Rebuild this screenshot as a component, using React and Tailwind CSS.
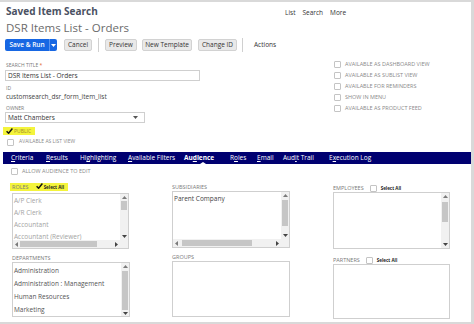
import React from "react";

const Arrow = ({ dir }) => {
  if (dir === "up")
    return (
      <svg width="5" height="3" viewBox="0 0 5 3"><polygon points="0,3 2.5,0 5,3" fill="#7a7a7a" /></svg>
    );
  if (dir === "down")
    return (
      <svg width="5" height="3" viewBox="0 0 5 3"><polygon points="0,0 5,0 2.5,3" fill="#444" /></svg>
    );
  if (dir === "left")
    return (
      <svg width="3" height="5" viewBox="0 0 3 5"><polygon points="3,0 3,5 0,2.5" fill="#7a7a7a" /></svg>
    );
  return (
    <svg width="3" height="5" viewBox="0 0 3 5"><polygon points="0,0 0,5 3,2.5" fill="#444" /></svg>
  );
};

const Check = () => (
  <svg width="7" height="6" viewBox="0 0 7 6">
    <path d="M0.6 3.2 L2.6 5.2 L6.4 0.6" stroke="#111" strokeWidth="1.5" fill="none" />
  </svg>
);

const Box = () => (
  <div className="h-[7px] w-[7px] shrink-0 rounded-[1px] border border-[#c4c4c4] bg-white" />
);

function VScroll({ thumb }) {
  return (
    <div className="flex w-[8px] shrink-0 flex-col bg-[#f1f1f1]">
      <div className="flex h-[7px] items-center justify-center">
        <Arrow dir="up" />
      </div>
      <div className="flex-1">
        <div className={"mx-[1px] bg-[#c6c6c6] " + thumb} />
      </div>
      <div className="flex h-[7px] items-center justify-center">
        <Arrow dir="down" />
      </div>
    </div>
  );
}

function HScroll({ thumb }) {
  return (
    <div className="flex h-[8px] shrink-0">
      <div className="flex flex-1 bg-[#f1f1f1]">
        <div className="flex w-[7px] items-center justify-center">
          <Arrow dir="left" />
        </div>
        <div className="flex-1 py-[1px]">
          <div className={"h-full bg-[#c6c6c6] " + thumb} />
        </div>
        <div className="flex w-[7px] items-center justify-center">
          <Arrow dir="right" />
        </div>
      </div>
      <div className="w-[8px] bg-[#f1f1f1]" />
    </div>
  );
}

const Label = ({ children, className = "" }) => (
  <div className={"text-[5.5px] uppercase leading-[8px] text-[#7a7a7a] " + className}>{children}</div>
);

const tabs = [
  ["", "C", "riteria", "w-[35px]"],
  ["", "R", "esults", "w-[34px]"],
  ["Hi", "g", "hlighting", "w-[48px]"],
  ["", "A", "vailable Filters", "w-[56px]"],
  ["Au", "d", "ience", "w-[46px]"],
  ["R", "o", "les", "w-[27px]"],
  ["", "E", "mail", "w-[26px]"],
  ["Aud", "i", "t Trail", "w-[46px]"],
  ["E", "x", "ecution Log", "w-[60px]"],
];

export default function App() {
  return (
    <div className="h-[324px] w-[474px] overflow-hidden border-t-2 border-r-[3px] border-b-2 border-[#d9d9d9] bg-white font-['Open_Sans',sans-serif] text-[#333]">
      {/* Header */}
      <div className="flex pl-[5px]">
        <div className="w-[280px]">
          <div className="mt-[2px] pl-[1px] text-[10px] font-bold leading-[14px] text-[#4a5162]">
            Saved Item Search
          </div>
          <div className="mt-[2px] pl-[1px] text-[11.5px] leading-[16px] text-[#6b6b6b]">
            DSR Items List - Orders
          </div>
          <div className="mt-[3px] flex h-[12px] items-center text-[6.5px]">
            <div className="flex h-full w-[44px] items-center justify-center rounded-l-[2px] bg-[#1767e3] font-semibold text-white">
              Save &amp; Run
            </div>
            <div className="flex h-full w-[8px] items-center justify-center rounded-r-[2px] border-l border-[#5b93ee] bg-[#1767e3]">
              <svg width="5" height="3" viewBox="0 0 5 3"><polygon points="0,0 5,0 2.5,3" fill="#fff" /></svg>
            </div>
            <div className="ml-[7px] flex h-full w-[28px] items-center justify-center rounded-[2px] border border-[#d2d2d2] bg-[#e9e9e9]">
              Cancel
            </div>
            <div className="ml-[6px] h-[14px] w-[1px] bg-[#d0d0d0]" />
            <div className="ml-[6px] flex h-full w-[32px] items-center justify-center rounded-[2px] border border-[#d2d2d2] bg-[#e9e9e9]">
              Preview
            </div>
            <div className="ml-[5px] flex h-full w-[50px] items-center justify-center rounded-[2px] border border-[#d2d2d2] bg-[#e9e9e9]">
              New Template
            </div>
            <div className="ml-[6px] flex h-full w-[39px] items-center justify-center rounded-[2px] border border-[#d2d2d2] bg-[#e9e9e9]">
              Change ID
            </div>
            <div className="ml-[5px] h-[14px] w-[1px] bg-[#d0d0d0]" />
            <div className="ml-[11px]">Actions</div>
          </div>
        </div>
        <div className="mt-[6px] flex h-[9px] gap-[7px] text-[6.5px] leading-[9px]">
          <span>List</span>
          <span>Search</span>
          <span>More</span>
        </div>
      </div>

      {/* Main fields */}
      <div className="flex pl-[5px]">
        <div className="w-[329px]">
          <Label className="mt-[10px] pl-[1px] text-[5px]">
            Search Title <span className="text-[#e0602a]">*</span>
          </Label>
          <div className="mt-[1px] flex h-[11px] w-[195px] items-center border border-[#cfcfcf] pl-[2px] text-[6.5px]">
            DSR Items List - Orders
          </div>
          <Label className="mt-[3px] pl-[1px] text-[5px]">ID</Label>
          <div className="pl-[1px] text-[6.5px] leading-[9px] text-[#444]">customsearch_dsr_form_item_list</div>
          <Label className="mt-[3px] pl-[1px] text-[5px]">Owner</Label>
          <div className="flex h-[11px] w-[140px] items-center justify-between border border-[#cfcfcf] pl-[2px] pr-[6px] text-[6.5px]">
            <span>Matt Chambers</span>
            <svg width="5" height="3" viewBox="0 0 5 3"><polygon points="0,0 5,0 2.5,3" fill="#555" /></svg>
          </div>
          <div className="-ml-[2px] mt-[4px] flex h-[8px] w-[32px] items-center gap-[1px] bg-[#f4f43c] pl-[3px]">
            <Check />
            <span className="text-[5px] uppercase leading-[8px] text-[#a08a2a]">Public</span>
          </div>
          <div className="mt-[3px] flex h-[8px] items-center gap-[5px] pl-[2px]">
            <Box />
            <span className="text-[5px] uppercase text-[#8a8a8a]">Available as list view</span>
          </div>
        </div>
        <div className="mt-[8px] flex flex-col">
          {[
            "Available as dashboard view",
            "Available as sublist view",
            "Available for reminders",
            "Show in menu",
            "Available as product feed",
          ].map((t) => (
            <div key={t} className="flex h-[11px] items-center gap-[4px]">
              <Box />
              <span className="text-[5.5px] uppercase text-[#8a8a8a]">{t}</span>
            </div>
          ))}
        </div>
      </div>

      {/* Tabs */}
      <div className="ml-[3px] mt-[6px] flex h-[12px] items-center bg-[#000070] pl-[8px] text-[6.5px] text-white">
        {tabs.map(([a, u, b, w]) => (
          <div
            key={a + u + b}
            className={"relative flex h-full shrink-0 items-center " + w + (u === "d" ? " font-bold" : "")}
          >
            <span className="whitespace-nowrap">
              {a}
              <span className="underline underline-offset-[1px]">{u}</span>
              {b}
            </span>
            {u === "d" && (
              <div className="absolute bottom-0 left-[16px] h-0 w-0 border-x-[3px] border-b-[2px] border-x-transparent border-b-white" />
            )}
          </div>
        ))}
      </div>

      {/* Allow audience */}
      <div className="ml-[11px] mt-[3px] flex h-[8px] items-center gap-[4px]">
        <Box />
        <span className="text-[5.5px] uppercase text-[#8a8a8a]">Allow audience to edit</span>
      </div>

      {/* Lists */}
      <div className="mt-[8px] flex">
        {/* Column 1 */}
        <div className="ml-[12px] flex w-[118px] flex-col">
          <div className="-ml-[2px] flex h-[8px] w-[58px] items-center bg-[#f4f43c] pl-[2px]">
            <Label>Roles</Label>
            <div className="ml-[7px] mb-[2px]">
              <Check />
            </div>
            <span className="ml-[1px] text-[4.5px] font-bold text-[#222]">Select All</span>
          </div>
          <div className="mt-[2px] flex h-[56px] w-[117px] flex-col border border-[#cfcfcf]">
            <div className="flex min-h-0 flex-1">
              <div className="flex-1 overflow-hidden pl-[1px] pt-[1px] text-[6.5px] leading-[12px] text-[#a3a3a3]">
                <div>A/P Clerk</div>
                <div>A/R Clerk</div>
                <div>Accountant</div>
                <div>Accountant (Reviewer)</div>
              </div>
              <VScroll thumb="mt-[0px] h-[9px]" />
            </div>
            <HScroll thumb="w-[77px]" />
          </div>
          <Label className="mt-[5px]">Departments</Label>
          <div className="flex h-[55px] border border-[#cfcfcf]">
            <div className="flex-1 overflow-hidden pl-[1px] pt-[1px] text-[6.5px] leading-[13px] text-[#555]">
              <div>Administration</div>
              <div>Administration : Management</div>
              <div>Human Resources</div>
              <div>Marketing</div>
            </div>
            <VScroll thumb="mt-[2px] h-[39px]" />
          </div>
        </div>

        {/* Column 2 */}
        <div className="ml-[42px] flex w-[118px] flex-col">
          <Label>Subsidiaries</Label>
          <div className="flex h-[57px] flex-col border border-[#cfcfcf]">
            <div className="flex min-h-0 flex-1">
              <div className="flex-1 pl-[1px] pt-[1px] text-[6.5px] leading-[12.5px] text-[#444]">Parent Company</div>
              <VScroll thumb="mt-[1px] h-[26px]" />
            </div>
            <HScroll thumb="ml-[2px] w-[70px]" />
          </div>
          <Label className="mt-[5px]">Groups</Label>
          <div className="h-[56px] border border-[#cfcfcf]" />
        </div>

        {/* Column 3 */}
        <div className="ml-[43px] flex w-[117px] flex-col">
          <div className="mt-[1px] flex h-[8px] items-center">
            <Label>Employees</Label>
            <div className="ml-[6px]">
              <Box />
            </div>
            <span className="ml-[4px] text-[4.5px] font-bold text-[#222]">Select All</span>
          </div>
          <div className="flex h-[57px] border border-[#cfcfcf]">
            <div className="flex-1" />
            <VScroll thumb="mt-[2px] h-[20px]" />
          </div>
          <div className="mt-[7px] flex h-[8px] items-center">
            <Label>Partners</Label>
            <div className="ml-[6px]">
              <Box />
            </div>
            <span className="ml-[4px] text-[4.5px] font-bold text-[#222]">Select All</span>
          </div>
          <div className="h-[55px] border border-[#cfcfcf]" />
        </div>
      </div>
    </div>
  );
}
